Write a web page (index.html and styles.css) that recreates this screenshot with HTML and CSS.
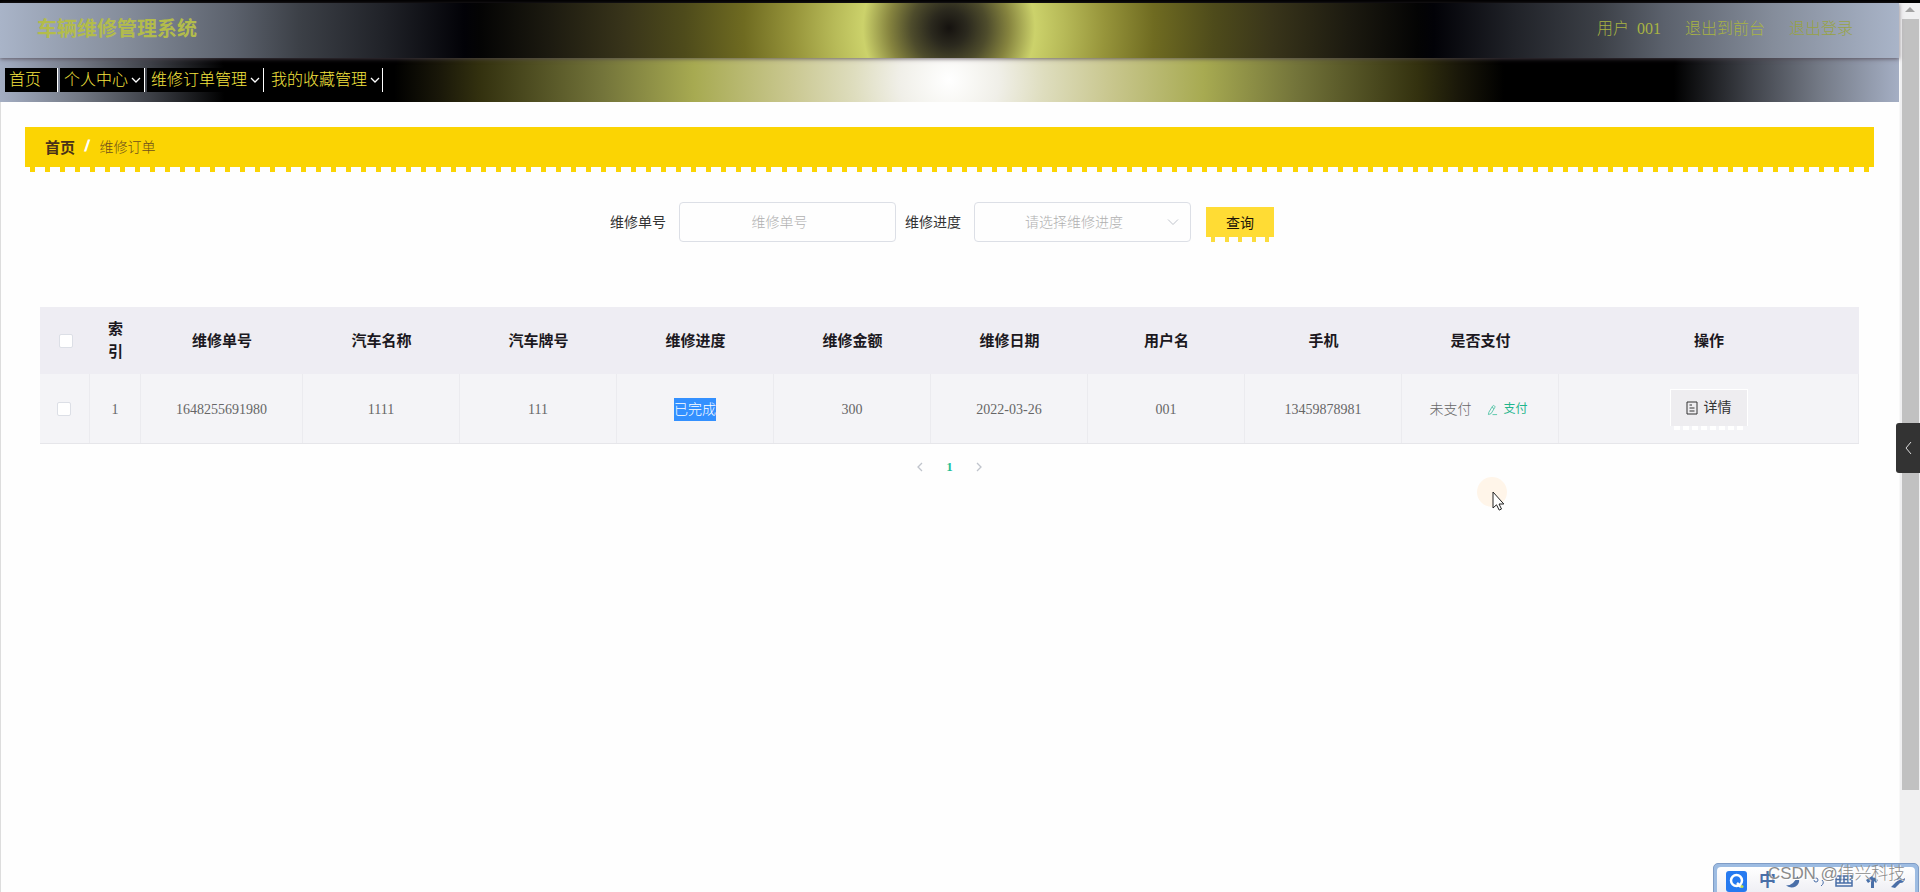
FILE: index.html
```html
<!DOCTYPE html>
<html lang="zh-CN">
<head>
    <meta charset="UTF-8">
    <meta name="viewport" content="width=device-width, initial-scale=1.0">
    <title>车辆维修管理系统</title>
    <link rel="stylesheet" href="styles.css">
</head>
<body>
    <div class="app">
        <div class="page">
            <header class="header">
                <h1 class="logo">车辆维修管理系统</h1>
                <div class="user-links">
                    <span>用户 001</span>
                    <span>退出到前台</span>
                    <span class="logout">退出登录</span>
                </div>
            </header>
            <nav class="nav">
                <a class="nav-item nav-home">首页</a>
                <a class="nav-item">个人中心<svg class="arrow" viewBox="0 0 10 6"><path d="M1 1l4 4 4-4"/></svg></a>
                <a class="nav-item nav-order">维修订单管理<svg class="arrow" viewBox="0 0 10 6"><path d="M1 1l4 4 4-4"/></svg></a>
                <a class="nav-item nav-fav">我的收藏管理<svg class="arrow" viewBox="0 0 10 6"><path d="M1 1l4 4 4-4"/></svg></a>
            </nav>

            <main class="main">
                <div class="breadcrumb">
                    <b>首页</b>
                    <span class="slash">/</span>
                    <span>维修订单</span>
                </div>

                <form class="search">
                    <label>维修单号</label>
                    <div class="field">维修单号</div>
                    <label>维修进度</label>
                    <div class="field select">请选择维修进度
                        <svg class="caret" viewBox="0 0 12 8"><path d="M1 1.5l5 5 5-5"/></svg>
                    </div>
                    <div class="query-btn">查询</div>
                </form>

                <table class="table">
                    <colgroup>
                        <col class="c-check"><col class="c-index"><col class="c-no">
                        <col class="c-base"><col class="c-base"><col class="c-base"><col class="c-base">
                        <col class="c-base"><col class="c-base"><col class="c-base"><col class="c-base">
                        <col class="c-action">
                    </colgroup>
                    <thead>
                        <tr>
                            <th><span class="checkbox"></span></th>
                            <th class="index">索引</th>
                            <th>维修单号</th>
                            <th>汽车名称</th>
                            <th>汽车牌号</th>
                            <th>维修进度</th>
                            <th>维修金额</th>
                            <th>维修日期</th>
                            <th>用户名</th>
                            <th>手机</th>
                            <th>是否支付</th>
                            <th>操作</th>
                        </tr>
                    </thead>
                    <tbody>
                        <tr>
                            <td><span class="checkbox"></span></td>
                            <td>1</td>
                            <td>1648255691980</td>
                            <td>1111</td>
                            <td>111</td>
                            <td><span class="selected">已完成</span></td>
                            <td>300</td>
                            <td>2022-03-26</td>
                            <td>001</td>
                            <td>13459878981</td>
                            <td>
                                <div class="pay">
                                    <span>未支付</span>
                                    <a class="pay-link">
                                        <svg class="pen" viewBox="0 0 12 12"><path d="M2 8.5L6.2 1.6q.6-.9 1.5-.3l.6.4q.8.6.3 1.4L4.5 9.9 1.5 11z M5.4 3l2.3 1.5 M6 11h5"/></svg>支付
                                    </a>
                                </div>
                            </td>
                            <td>
                                <a class="detail-btn">
                                    <svg class="doc" viewBox="0 0 12 14"><path d="M1 1h10v12H1z M3.5 4h2.5 M3.5 7h5 M3.5 10h5"/></svg>详情
                                </a>
                            </td>
                        </tr>
                    </tbody>
                </table>

                <div class="pager">
                    <svg class="page-arrow" viewBox="0 0 6 10"><path d="M5 1L1 5l4 4"/></svg>
                    <b>1</b>
                    <svg class="page-arrow" viewBox="0 0 6 10"><path d="M1 1l4 4-4 4"/></svg>
                </div>
            </main>
        </div>
        <div class="scrollbar">
            <svg class="scroll-up" viewBox="0 0 10 6"><path d="M0 6l5-5 5 5z"/></svg>
            <div class="thumb"></div>
        </div>
    </div>

    <div class="side-tab"><svg viewBox="0 0 7 14"><path d="M6 1L1 7l5 6"/></svg></div>

    <div class="halo"></div>
    <svg class="cursor" viewBox="0 0 13 20"><path d="M1 1v16l3.5-3.2 2.7 5.3 2.3-1.1-2.5-5h4.8z"/></svg>

    <div class="ime">
        <div class="ime-inner">
            <svg class="ime-q" viewBox="0 0 21 21"><rect width="21" height="21" rx="3"/><circle cx="10.5" cy="9.5" r="5.5"/><path d="M11 12l4 4"/><circle class="dot" cx="16" cy="15.5" r="1.5"/></svg>
            <b>中</b>
            <svg class="moon" viewBox="0 0 16 14"><path d="M13 0q5 7-2 12-5 3-11-1 9 0 13-11z"/></svg>
            <svg class="punct" viewBox="0 0 12 10"><circle cx="3" cy="3" r="2"/><path d="M9 3q3 3-1 6"/></svg>
            <svg class="keyboard" viewBox="0 0 18 12"><path d="M1 1h16v10H1z M1 4.5h16 M1 8h16 M5 1v7 M9 1v7 M13 1v7"/></svg>
            <svg class="shirt" viewBox="0 0 14 14"><path d="M7 1L1 5l2 3 3-2v7h3V6l2 2 2-3z"/></svg>
            <svg class="wrench" viewBox="0 0 14 14"><path d="M0 12l6-6q0-4 4-5l-1 3 2 1 3-2q0 5-5 5l-5 5z"/></svg>
        </div>
    </div>
    <div class="watermark">CSDN @伟兴科技</div>
</body>
</html>
```

FILE: styles.css
```css
* {
    box-sizing: border-box;
}

body {
    margin: 0;
    height: 892px;
    overflow: hidden;
    position: relative;
    background: #fefefe;
    color: #666;
    font-family: "Liberation Serif", "Noto Sans CJK SC", serif;
    font-size: 14px;
}

svg {
    fill: none;
    stroke: currentColor;
    flex: none;
}

.app {
    display: flex;
    height: 892px;
    border-top: 3px solid #000;
}

.page {
    width: 1899px;
    border-left: 1px solid #ddd;
}

/* header */
.header {
    height: 55px;
    margin-left: -1px;
    padding: 0 46px 6px 37px;
    display: flex;
    align-items: center;
    justify-content: space-between;
    position: relative;
    background: radial-gradient(circle at 949px 25px, #15120f 0, #2b291e 18px, #4e4c2c 38px, #86843f 60px, #ccd26b 86px, #b7ba58 115px, #97953b 155px, #6f6b21 205px, #4e4b1b 265px, #38341a 325px, #1c1a10 400px, #040404 469px, #020207 485px, #202228 565px, #3c4047 650px, #5b616c 715px, #858d9b 825px, #a9b4c8 949px);
    box-shadow: 0 1px 4px rgba(80, 70, 80, 0.8);
}

.logo {
    margin: 2px 0 0;
    font-size: 20px;
    line-height: 30px;
    color: #b3bc4b;
}

.user-links {
    display: flex;
    gap: 24px;
    margin-top: -1px;
    font-size: 16px;
    font-weight: 300;
    color: #a9b443;
    word-spacing: 4px;
}

.logout {
    color: #98a344;
}

/* menu */
.nav {
    height: 44px;
    margin-left: -1px;
    padding: 10px 5px;
    display: flex;
    background: radial-gradient(circle at 949px 22px, #fff 0, #f0efe8 50px, #deddbe 95px, #c9c78f 160px, #a7aa51 255px, #73743a 347px, #33310f 469px, #191709 510px, #000 555px, #000 725px, #3e4148 800px, #737985 870px, #a4aec3 949px);
}

.nav-item {
    height: 24px;
    margin-right: 2px;
    padding-left: 4px;
    width: 85px;
    display: flex;
    align-items: center;
    background: #000;
    border-right: 1px solid #fff;
    color: #f6e53e;
    font-size: 16px;
    font-weight: 300;
    line-height: 24px;
}

.nav-home {
    width: 53px;
}

.nav-order {
    width: 117px;
}

.nav-fav {
    width: 117px;
    padding-left: 5px;
}

.arrow {
    width: 10px;
    height: 6px;
    margin-left: 3px;
    color: #fff;
    stroke-width: 1.3;
}

.main {
    padding: 25px 25px 0 24px;
}

.breadcrumb {
    height: 45px;
    padding: 0 20px 7px;
    display: flex;
    align-items: center;
    color: #6e4f1c;
    background:
        linear-gradient(#fbd403, #fbd403) 0 0 / 100% 40px no-repeat,
        repeating-linear-gradient(90deg, transparent 0 5px, #fbd403 5px 10px, transparent 10px 15.03px);
}

.breadcrumb b {
    font-size: 15px;
    color: #4a3219;
}

.breadcrumb span {
    font-weight: 300;
}

.breadcrumb .slash {
    margin: 0 10px;
    color: #fff;
    font-size: 16px;
    font-weight: bold;
    -webkit-text-stroke: 1px #fff;
}

/* search */
.search {
    margin: 30px 0 0;
    height: 40px;
    display: flex;
    align-items: center;
    padding-left: 585px;
    color: #333;
}

.search label {
    width: 56px;
    margin-top: -2px;
    white-space: nowrap;
}

.field {
    width: 217px;
    height: 40px;
    margin: 0 9px 0 13px;
    padding-right: 16px;
    border: 1px solid #dcdfe6;
    border-radius: 4px;
    line-height: 39px;
    text-align: center;
    font-weight: 300;
    color: #b0b0b0;
}

.select {
    display: flex;
    justify-content: flex-end;
    align-items: center;
    gap: 44px;
    padding-right: 11px;
    margin-right: 15px;
}

.caret {
    width: 12px;
    height: 8px;
    color: #c0c4cc;
}

.query-btn {
    width: 68px;
    height: 35px;
    margin-top: 5px;
    line-height: 34px;
    text-align: center;
    color: #1c1408;
    background:
        linear-gradient(#ffdc34, #ffdc34) 0 0 / 100% 30px no-repeat,
        repeating-linear-gradient(90deg, transparent 0 5px, #fbdc3c 5px 9px, transparent 9px 13.6px);
}

/* table */
.table {
    width: 1819px;
    margin: 65px 0 0 15px;
    table-layout: fixed;
    border-collapse: separate;
    border-spacing: 0;
    text-align: center;
    background: #f4f4f7;
    border-bottom: 1px solid #e6e6ea;
}

.c-check { width: 50px; }
.c-index { width: 51px; }
.c-no { width: 162px; }
.c-base { width: 157px; }
.c-action { width: 300px; }

.table th {
    height: 67px;
    padding: 2px 10px 0;
    background: #eeedf3;
    color: #1b1820;
    font-size: 15px;
    line-height: 23px;
}

.table th.index {
    padding: 1px 18px 0;
}

.table td {
    height: 69px;
    padding: 2px 0 0;
    border-right: 1px solid #ebebef;
    line-height: 23px;
    font-weight: 300;
}

.checkbox {
    display: block;
    width: 14px;
    height: 14px;
    margin: -2px auto 0 9px;
    background: #fff;
    border: 1px solid #dcdfe6;
    border-radius: 2px;
}

.table td .checkbox {
    margin-left: 17px;
}

.selected {
    display: inline-block;
    background: #3390ff;
    color: #fff;
}

.pay,
.pay-link {
    display: flex;
    align-items: center;
    justify-content: center;
}

.pay {
    gap: 16px;
    margin-left: -3px;
}

.pay-link {
    gap: 5px;
    font-size: 12px;
    font-weight: 400;
    color: #1fb58c;
}

.pen {
    width: 11px;
    height: 12px;
    opacity: 0.75;
}

.detail-btn {
    width: 78px;
    height: 41px;
    margin: 0 auto;
    padding-bottom: 4px;
    display: flex;
    align-items: center;
    justify-content: center;
    gap: 6px;
    color: #333;
    font-weight: 400;
    background:
        repeating-linear-gradient(90deg, #fff 0 6px, transparent 6px 9px) 4px 100% / 70px 4px no-repeat,
        linear-gradient(#eeedf0, #eeedf0) 1px 1px / 76px 36px no-repeat,
        linear-gradient(#fff, #fff) 0 0 / 100% 37px no-repeat;
}

.doc {
    width: 12px;
    height: 14px;
}

/* pagination */
.pager {
    height: 28px;
    margin-top: 9px;
    display: flex;
    align-items: center;
    justify-content: center;
    gap: 23px;
    color: #c0c4cc;
    font-size: 13px;
}

.pager b {
    color: #1fbf96;
}

.page-arrow {
    width: 6px;
    height: 10px;
    stroke-width: 1.3;
}

/* scrollbar */
.scrollbar {
    width: 21px;
    display: flex;
    flex-direction: column;
    align-items: center;
    background: #f0f0f1;
    border-left: 1px solid #f8f8f8;
}

.scroll-up {
    width: 10px;
    height: 6px;
    margin: 3px 0 7px;
    fill: #a3a3a3;
    stroke: none;
}

.thumb {
    width: 17px;
    height: 771px;
    background: #c1c1c1;
}

.side-tab {
    position: absolute;
    left: 1896px;
    top: 423px;
    width: 24px;
    height: 50px;
    display: flex;
    align-items: center;
    justify-content: center;
    background: #333;
    border-radius: 3px 0 0 3px;
    color: #ddd;
}

.side-tab svg {
    width: 7px;
    height: 14px;
}

.halo {
    position: absolute;
    left: 1477px;
    top: 477px;
    width: 30px;
    height: 30px;
    border-radius: 50%;
    background: #fff5e9;
}

.cursor {
    position: absolute;
    left: 1492px;
    top: 491px;
    width: 13px;
    height: 20px;
    fill: #fff;
    stroke: #222;
}

/* input method bar */
.ime {
    position: absolute;
    left: 1713px;
    top: 863px;
    width: 206px;
    height: 40px;
    padding: 3px;
    background: #9dbce2;
    border: 1px solid #7f9cc6;
    border-radius: 5px;
}

.ime-inner {
    height: 34px;
    padding: 4px 0 0 9px;
    display: flex;
    align-items: flex-start;
    background: linear-gradient(#fff, #e9e9f0);
    border-radius: 4px;
    color: #4a6fa8;
}

.ime-inner b {
    margin: 0 10px 0 12px;
    font-size: 17px;
    line-height: 20px;
}

.ime-q {
    width: 21px;
    height: 21px;
    fill: #267af0;
    stroke: none;
}

.ime-q circle,
.ime-q path {
    stroke: #fff;
    stroke-width: 2.5;
}

.ime-q .dot {
    fill: #c5e04b;
    stroke: none;
}

.moon,
.shirt,
.wrench {
    width: 14px;
    height: 14px;
    margin-top: 4px;
    fill: #4a6fa8;
    stroke: none;
}

.punct {
    width: 12px;
    height: 10px;
    margin: 6px 10px 0 13px;
}

.keyboard {
    width: 18px;
    height: 12px;
    margin-top: 4px;
    stroke-width: 1.5;
}

.shirt {
    margin-left: 12px;
}

.wrench {
    margin-left: 12px;
}

.watermark {
    position: absolute;
    left: 1768px;
    top: 862px;
    font-family: "Liberation Sans", "Noto Sans CJK SC", sans-serif;
    font-size: 17px;
    line-height: 24px;
    font-weight: 300;
    letter-spacing: -0.1px;
    white-space: nowrap;
    color: #8b8b8b;
    text-shadow: 1px 1px 0 #fff;
}
```
